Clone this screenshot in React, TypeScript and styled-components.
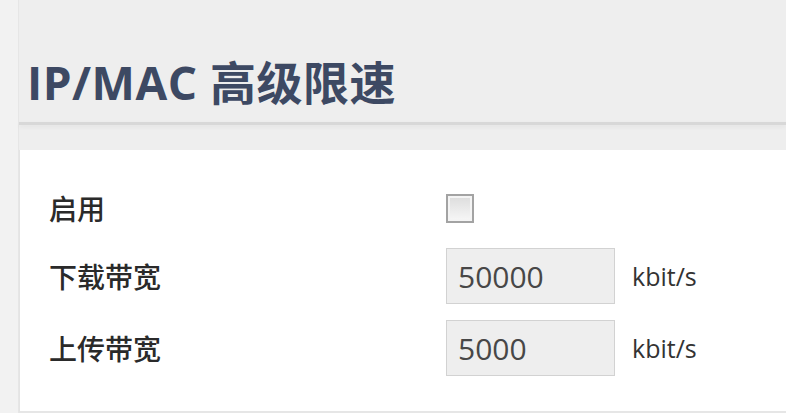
import { createGlobalStyle, styled } from "styled-components"

const Global = createGlobalStyle`
html, body {
    margin: 0;
    padding: 0;
    background: #f2f2f2;
}
#root {
    height: 413px;
    overflow: hidden;
}
`

interface Field {
    label: string
    value: string
    unit: string
}

const fields: Field[] = [
    { label: '下载带宽', value: '50000', unit: 'kbit/s' },
    { label: '上传带宽', value: '5000', unit: 'kbit/s' },
]

export default function App() {
    return (
        <>
            <Global />
            <Page>
                <Header>
                    <Title>IP/MAC 高级限速</Title>
                </Header>
                <Divider />
                <Panel>
                    <Row $top={43} $height={30}>
                        <Label>启用</Label>
                        <Check />
                    </Row>
                    {fields.map((f, i) => (
                        <Row key={f.label} $top={i === 0 ? 25 : 16} $height={56}>
                            <Label>{f.label}</Label>
                            <Input>{f.value}</Input>
                            <Unit>{f.unit}</Unit>
                        </Row>
                    ))}
                </Panel>
            </Page>
        </>
    )
}

const Page = styled.div`
margin-left: 18px;
height: 413px;
background: #eeeeee;
border-left: 1px solid #e6e6e6;
display: flex;
flex-direction: column;
font-family: "Open Sans", "Noto Sans CJK SC", sans-serif;
`
const Header = styled.div`
height: 122px;
display: flex;
align-items: center;
padding-left: 8px;
padding-top: 38px;
box-sizing: border-box;
`
const Title = styled.div`
font-size: 46px;
font-weight: 700;
color: #3d4963;
letter-spacing: 0.5px;
`
const Divider = styled.div`
height: 3px;
background: #d8d8d8;
box-shadow: 0 2px 4px rgba(0, 0, 0, 0.05);
`
const Panel = styled.div`
margin-top: 25px;
flex: 1;
background: #ffffff;
border-left: 1px solid #e4e4e4;
border-bottom: 2px solid #e6e6e6;
padding-left: 29px;
display: flex;
flex-direction: column;
`
const Row = styled.div<{ $top: number; $height: number }>`
margin-top: ${p => p.$top}px;
height: ${p => p.$height}px;
display: flex;
align-items: center;
`
const Label = styled.div`
width: 397px;
font-size: 28px;
font-weight: 500;
color: #2a2a2a;
font-family: "Noto Sans CJK SC", sans-serif;
`
const Check = styled.span`
width: 28px;
height: 29px;
box-sizing: border-box;
border: 2px solid #a3a3a3;
background: linear-gradient(#dcdcdc, #f7f7f7);
box-shadow: inset 0 0 0 2px #f4f4f4;
`
const Input = styled.div`
width: 169px;
height: 56px;
box-sizing: border-box;
background: #eeeeee;
border: 1px solid #d2d2d2;
padding-left: 11px;
display: flex;
align-items: center;
font-size: 30px;
color: #474747;
`
const Unit = styled.div`
margin-left: 17px;
font-size: 25px;
color: #333333;
`
